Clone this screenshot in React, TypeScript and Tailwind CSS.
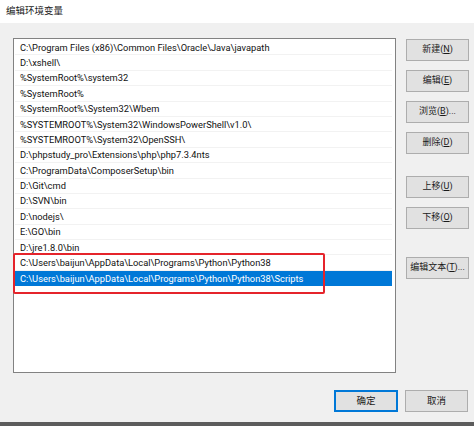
import React from "react";

const paths = [
  "C:\\Program Files (x86)\\Common Files\\Oracle\\Java\\javapath",
  "D:\\xshell\\",
  "%SystemRoot%\\system32",
  "%SystemRoot%",
  "%SystemRoot%\\System32\\Wbem",
  "%SYSTEMROOT%\\System32\\WindowsPowerShell\\v1.0\\",
  "%SYSTEMROOT%\\System32\\OpenSSH\\",
  "D:\\phpstudy_pro\\Extensions\\php\\php7.3.4nts",
  "C:\\ProgramData\\ComposerSetup\\bin",
  "D:\\Git\\cmd",
  "D:\\SVN\\bin",
  "D:\\nodejs\\",
  "E:\\GO\\bin",
  "D:\\jre1.8.0\\bin",
  "C:\\Users\\baijun\\AppData\\Local\\Programs\\Python\\Python38",
  "C:\\Users\\baijun\\AppData\\Local\\Programs\\Python\\Python38\\Scripts",
];

const font = "font-['Roboto','Noto_Sans_CJK_SC',sans-serif]";

function Btn({
  label,
  hotkey,
  suffix = "",
  className = "",
}: {
  label: string;
  hotkey?: string;
  suffix?: string;
  className?: string;
}) {
  return (
    <div
      className={`flex h-[22px] w-[63px] items-center justify-center whitespace-nowrap border border-[#adadad] bg-[#e1e1e1] text-[9px] text-[#1a1a1a] ${className}`}
    >
      {label}
      {hotkey && (
        <>
          (<span className="underline">{hotkey}</span>)
        </>
      )}
      {suffix}
    </div>
  );
}

export default function App() {
  return (
    <div className={`flex h-[426px] w-[474px] flex-col bg-[#f0f0f0] ${font}`}>
      <div className="flex h-[23px] items-center bg-white pl-[6px] text-[9.5px] text-[#222]">
        编辑环境变量
      </div>

      <div className="flex pt-[15px]">
        <div className="relative ml-[13px] h-[335px] w-[383px] border border-[#828282] bg-white pt-[1px] pl-[1px] pr-[3px]">
          {paths.map((p, i) => {
            const selected = i === paths.length - 1;
            return (
              <div
                key={p}
                className={`flex h-[15.4px] items-center whitespace-nowrap pl-[5px] text-[9.3px] leading-none ${
                  selected
                    ? "bg-[#0078d7] text-white"
                    : "border-b border-[#f2f2f2] text-[#111]"
                }`}
              >
                {p}
              </div>
            );
          })}
          <div className="absolute left-[-1px] top-[214px] h-[41px] w-[312px] rounded-[2px] border-2 border-[#e5242b]" />
        </div>

        <div className="ml-[10px] flex flex-col pt-[1px]">
          <Btn label="新建" hotkey="N" />
          <Btn label="编辑" hotkey="E" className="mt-[9px]" />
          <Btn label="浏览" hotkey="B" suffix="..." className="mt-[9px]" />
          <Btn label="删除" hotkey="D" className="mt-[9px]" />
          <Btn label="上移" hotkey="U" className="mt-[22px]" />
          <Btn label="下移" hotkey="O" className="mt-[9px]" />
          <Btn label="编辑文本" hotkey="T" suffix="..." className="mt-[28px]" />
        </div>
      </div>

      <div className="mt-[17px] flex justify-end gap-[7px] pr-[6px]">
        <div className="flex h-[22px] w-[64px] items-center justify-center border-2 border-[#0078d7] bg-[#e1e1e1] text-[9.5px] text-[#1a1a1a]">
          确定
        </div>
        <div className="flex h-[22px] w-[63px] items-center justify-center border border-[#adadad] bg-[#e1e1e1] text-[9.5px] text-[#1a1a1a]">
          取消
        </div>
      </div>

      <div className="mt-auto h-[4px] bg-[#5c5c5c]" />
    </div>
  );
}
